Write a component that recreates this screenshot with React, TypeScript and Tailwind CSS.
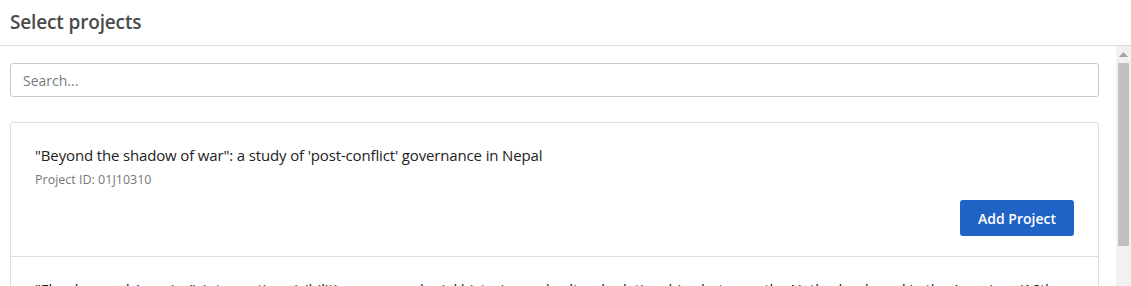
const projects = [
  {
    id: "01J10310",
    title: "\"Beyond the shadow of war\": a study of 'post-conflict' governance in Nepal",
  },
  {
    id: "01J10311",
    title:
      "\"Flanders and America\": intersecting visibilities across colonial histories and cultural relationships between the Netherlands and in the Americas (16th–20th centuries)",
  },
  {
    id: "01J10312",
    title: "Migration, memory and urban space in the Low Countries",
  },
];

function Scrollbar() {
  return (
    <div className="w-[15px] shrink-0 bg-[#f1f1f1] flex flex-col">
      <div className="h-[17px] flex items-center justify-center">
        <svg width="9" height="5" viewBox="0 0 9 5">
          <path d="M4.5 0 L9 5 L0 5 Z" fill="#a3a3a3" />
        </svg>
      </div>
      <div className="h-[183px] mx-[2px] bg-[#c1c1c1]" />
    </div>
  );
}

export default function App() {
  return (
    <div
      className="h-[286px] w-full bg-white flex flex-col"
      style={{ fontFamily: '"Open Sans", "Noto Sans", sans-serif' }}
    >
      <div className="h-[46px] shrink-0 border-b border-[#dcdcdc] px-[10px] flex items-center">
        <h1 className="text-[19px] font-semibold text-[#4a4a4a] tracking-[-0.15px]">
          Select projects
        </h1>
      </div>
      <div className="flex-1 min-h-0 flex">
        <div className="flex-1 overflow-hidden">
          <div className="pl-[10px] pr-[17px] pt-[17px] pb-6">
            <input
              type="text"
              placeholder="Search..."
              className="w-full h-[34px] border border-[#c8c8c8] rounded-[3px] px-3 text-[14px] text-[#333] placeholder:text-[#7a7a7a] outline-none"
            />
            <div className="mt-[25px] border border-[#dedede] rounded-[3px]">
              {projects.map((p, i) => (
                <div
                  key={p.id}
                  className={
                    "px-6 pt-[22px] pb-[20px] flex flex-col " +
                    (i > 0 ? "border-t border-[#dedede]" : "")
                  }
                >
                  <div className="text-[15px] leading-5 text-[#222] tracking-[-0.15px]">
                    {p.title}
                  </div>
                  <div className="mt-[7px] text-[12.5px] leading-4 text-[#777]">
                    Project ID: {p.id}
                  </div>
                  <div className="flex justify-end mt-[12px]">
                    <button className="h-9 px-[18px] rounded-[3px] bg-[#1f63c6] text-white text-[14px] font-semibold">
                      Add Project
                    </button>
                  </div>
                </div>
              ))}
            </div>
          </div>
        </div>
        <Scrollbar />
      </div>
    </div>
  );
}
